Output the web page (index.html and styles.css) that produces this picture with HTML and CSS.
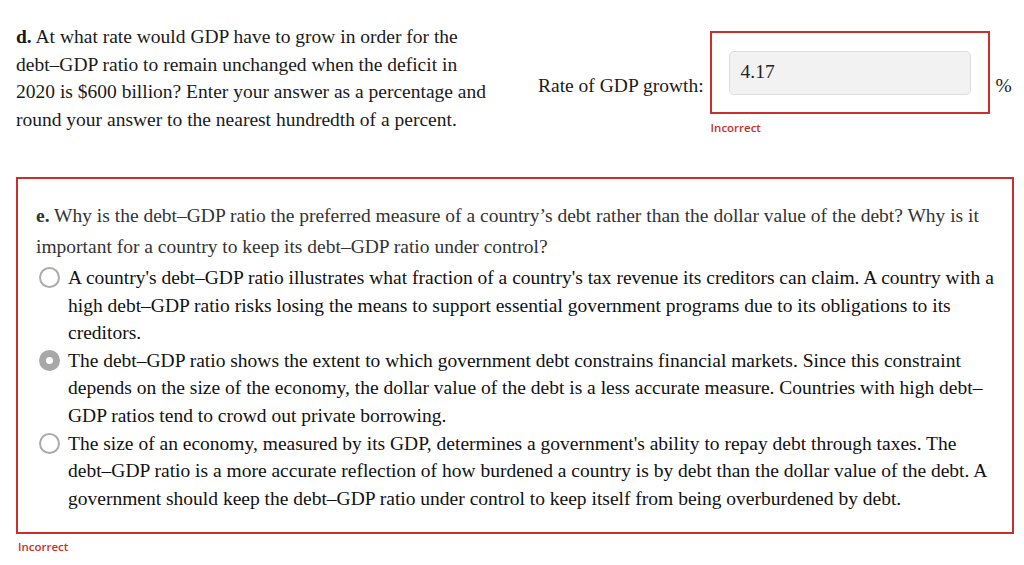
FILE: index.html
```html
<!DOCTYPE html>
<html>
<head>
<meta charset="utf-8">
<link rel="stylesheet" href="styles.css">
</head>
<body>
<div class="page">
  <section class="part-d">
    <p class="prompt"><b>d.</b> At what rate would GDP have to grow in order for the debt–GDP ratio to remain unchanged when the deficit in 2020 is $600 billion? Enter your answer as a percentage and round your answer to the nearest hundredth of a percent.</p>
    <div class="answer">
      <span class="label">Rate of GDP growth:</span>
      <div class="answer-col">
        <div class="box">
          <div class="input">4.17</div>
        </div>
        <div class="feedback">Incorrect</div>
      </div>
      <span class="unit">%</span>
    </div>
  </section>

  <section class="part-e">
    <div class="ebox">
      <p class="question"><b>e.</b> Why is the debt–GDP ratio the preferred measure of a country’s debt rather than the dollar value of the debt? Why is it important for a country to keep its debt–GDP ratio under control?</p>
      <div class="option">
        <span class="radio"></span>
        <span class="opt-text">A country's debt–GDP ratio illustrates what fraction of a country's tax revenue its creditors can claim. A country with a high debt–GDP ratio risks losing the means to support essential government programs due to its obligations to its creditors.</span>
      </div>
      <div class="option">
        <span class="radio checked"></span>
        <span class="opt-text">The debt–GDP ratio shows the extent to which government debt constrains financial markets. Since this constraint depends on the size of the economy, the dollar value of the debt is a less accurate measure. Countries with high debt–GDP ratios tend to crowd out private borrowing.</span>
      </div>
      <div class="option">
        <span class="radio"></span>
        <span class="opt-text">The size of an economy, measured by its GDP, determines a government's ability to repay debt through taxes. The debt–GDP ratio is a more accurate reflection of how burdened a country is by debt than the dollar value of the debt. A government should keep the debt–GDP ratio under control to keep itself from being overburdened by debt.</span>
      </div>
    </div>
    <div class="feedback e-feedback">Incorrect</div>
  </section>
</div>
</body>
</html>
```
FILE: styles.css
```css
html, body {
  margin: 0;
  padding: 0;
  background: #fff;
}
body {
  font-family: "Liberation Serif", "Times New Roman", serif;
  font-size: 19.5px;
  color: #1a1a1a;
}
.page {
  padding: 23px 10px 0 16px;
}
.part-d {
  display: flex;
  align-items: flex-start;
}
.prompt {
  margin: 0;
  width: 474px;
  flex: none;
  line-height: 27.7px;
  color: #1a1a1a;
}
.answer {
  display: flex;
  align-items: flex-start;
  margin-left: 48px;
  margin-top: 8px;
}
.label {
  margin-top: 45px;
  line-height: 20px;
  margin-right: 6px;
  white-space: nowrap;
}
.answer-col {
  display: flex;
  flex-direction: column;
}
.box {
  width: 242px;
  border: 2px solid #c9302c;
  padding: 18px 17px 17px 17px;
}
.input {
  height: 42px;
  border: 1px solid #dcdcdc;
  border-radius: 5px;
  background: #f2f2f2;
  padding: 0 11px;
  line-height: 40px;
  color: #222;
}
.unit {
  margin-top: 45px;
  margin-left: 6px;
  line-height: 20px;
}
.feedback {
  font-family: "Open Sans", "Liberation Sans", sans-serif;
  font-weight: 600;
  font-size: 11.5px;
  color: #c9302c;
  margin-top: 6px;
  margin-left: 1px;
  line-height: 16px;
}
.part-e {
  margin-top: 41px;
}
.ebox {
  width: 958px;
  border: 2px solid #c9302c;
  padding: 21px 18px 20px 18px;
}
.question {
  margin: 0 0 2px 0;
  line-height: 31px;
  color: #333;
}
.option {
  display: flex;
  align-items: flex-start;
  line-height: 27.6px;
  color: #111;
}
.radio {
  flex: none;
  box-sizing: border-box;
  width: 21px;
  height: 21px;
  border: 2px solid #ababab;
  border-radius: 50%;
  margin: 3px 8px 0 3px;
  background: #fff;
}
.radio.checked {
  border: 7px solid #a8a8a8;
}
.opt-text {
  flex: 1;
}
.e-feedback {
  margin-top: 5px;
  margin-left: 2px;
}
```
